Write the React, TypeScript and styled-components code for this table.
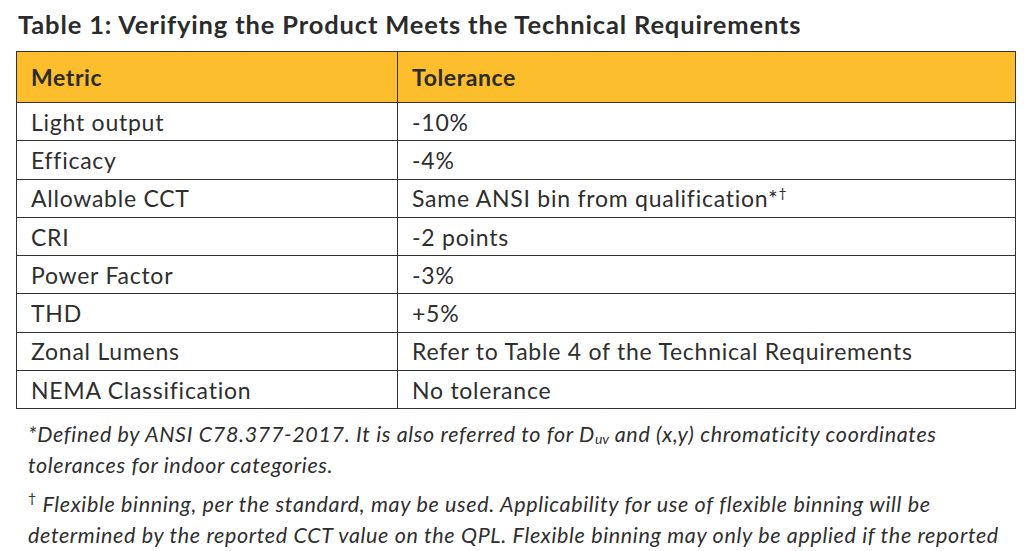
import React from 'react';
import styled, { createGlobalStyle } from 'styled-components';

const GlobalStyle = createGlobalStyle`
  html, body {
    margin: 0;
    padding: 0;
    background: #ffffff;
  }
  body {
    font-family: Lato, "Liberation Sans", sans-serif;
    color: #2e2e2e;
  }
`;

const Page = styled.div`
  width: 1024px;
  height: 551px;
  overflow: hidden;
  padding: 8px 0 0 16px;
  box-sizing: border-box;
`;

const Title = styled.h1`
  margin: 0 0 10px 2px;
  font-size: 25.5px;
  font-weight: 700;
  letter-spacing: 0.85px;
  line-height: 33px;
  white-space: nowrap;
  color: #2b2b2b;
`;

const Table = styled.table`
  width: 1000px;
  border-collapse: collapse;
  table-layout: fixed;
  border: 1px solid #333333;
`;

const HeadCell = styled.th`
  height: 51px;
  padding: 0 14px;
  background: #fdbe2d;
  border: 1px solid #333333;
  text-align: left;
  font-size: 23px;
  font-weight: 700;
  letter-spacing: 0.6px;
  color: #2b2b2b;
  box-sizing: border-box;
`;

const Cell = styled.td`
  height: 38.3px;
  padding: 0 14px;
  border: 1px solid #333333;
  font-size: 23px;
  font-weight: 400;
  letter-spacing: 0.75px;
  white-space: nowrap;
  color: #2e2e2e;
  box-sizing: border-box;
`;

const Sup = styled.sup`
  font-size: 14px;
  vertical-align: 9px;
  line-height: 0;
`;

const Note = styled.p`
  margin: 10px 0 0 12px;
  font-size: 21.5px;
  font-style: italic;
  letter-spacing: 0.65px;
  line-height: 31px;
  white-space: nowrap;
  color: #2e2e2e;

  & + & {
    margin-top: 8px;
  }
`;

const Sub = styled.sub`
  font-size: 14px;
  vertical-align: -2px;
  line-height: 0;
  letter-spacing: 0;
`;

const NoteSup = styled.sup`
  font-size: 14px;
  font-style: normal;
  vertical-align: 9px;
  line-height: 0;
`;

type Row = { metric: string; tolerance: React.ReactNode };

const rows: Row[] = [
  { metric: 'Light output', tolerance: '-10%' },
  { metric: 'Efficacy', tolerance: '-4%' },
  {
    metric: 'Allowable CCT',
    tolerance: (
      <>
        Same ANSI bin from qualification*<Sup>†</Sup>
      </>
    ),
  },
  { metric: 'CRI', tolerance: '-2 points' },
  { metric: 'Power Factor', tolerance: '-3%' },
  { metric: 'THD', tolerance: '+5%' },
  { metric: 'Zonal Lumens', tolerance: 'Refer to Table 4 of the Technical Requirements' },
  { metric: 'NEMA Classification', tolerance: 'No tolerance' },
];

const App = () => {
  return (
    <>
      <GlobalStyle />
      <Page>
        <Title>Table 1: Verifying the Product Meets the Technical Requirements</Title>
        <Table>
          <colgroup>
            <col style={{ width: 381 }} />
            <col />
          </colgroup>
          <thead>
            <tr>
              <HeadCell>Metric</HeadCell>
              <HeadCell>Tolerance</HeadCell>
            </tr>
          </thead>
          <tbody>
            {rows.map(row => (
              <tr key={row.metric}>
                <Cell>{row.metric}</Cell>
                <Cell>{row.tolerance}</Cell>
              </tr>
            ))}
          </tbody>
        </Table>
        <Note>
          *Defined by ANSI C78.377-2017. It is also referred to for D<Sub>uv</Sub> and (x,y)
          chromaticity coordinates
          <br />
          tolerances for indoor categories.
        </Note>
        <Note>
          <NoteSup>†</NoteSup> Flexible binning, per the standard, may be used. Applicability for
          use of flexible binning will be
          <br />
          determined by the reported CCT value on the QPL. Flexible binning may only be applied if
          the reported
        </Note>
      </Page>
    </>
  );
};

export default App;
